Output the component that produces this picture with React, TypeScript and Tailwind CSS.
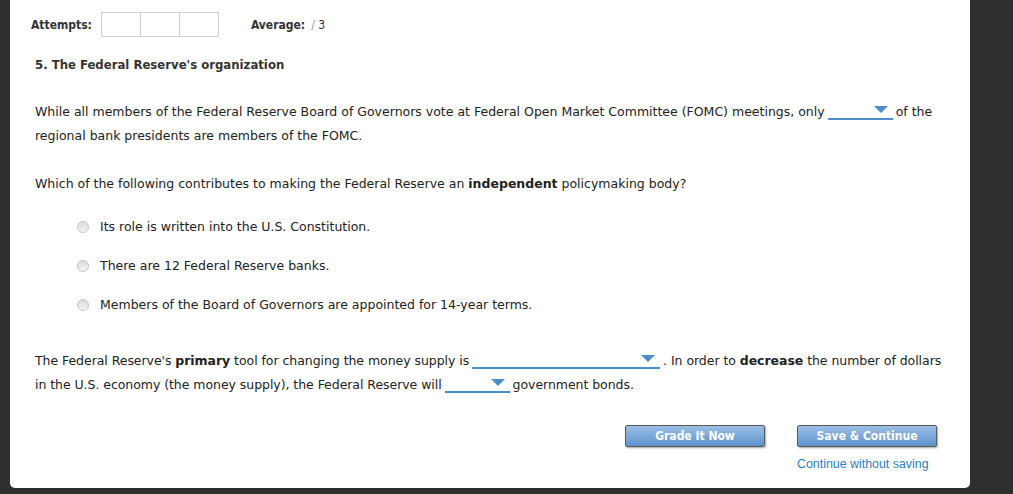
import React from "react";

function Dropdown({ width }: { width: number }) {
  return (
    <span
      className="inline-block relative align-[-4px] h-[17px] border-b-2 border-[#4f8dc9] mx-[3px]"
      style={{ width }}
    >
      <svg className="absolute right-[5px] top-[3px]" width="14" height="7" viewBox="0 0 14 7">
        <polygon points="0,0 14,0 7,7" fill="#4f8dc9" />
      </svg>
    </span>
  );
}

function Radio({ label }: { label: string }) {
  return (
    <div className="flex items-center h-[20px]">
      <span className="w-[12px] h-[12px] rounded-full border border-[#c4c4c4] bg-gradient-to-b from-[#dcdcdc] to-[#f4f4f4] ml-[67px] mr-[11px]" />
      <span>{label}</span>
    </div>
  );
}

const labelFont = { fontFamily: '"DejaVu Sans Condensed", "DejaVu Sans", Tahoma, sans-serif' };

export default function App() {
  const options = [
    "Its role is written into the U.S. Constitution.",
    "There are 12 Federal Reserve banks.",
    "Members of the Board of Governors are appointed for 14-year terms.",
  ];

  return (
    <div className="w-[1013px] h-[494px] bg-[#2f2f2f] overflow-hidden">
      <div
        className="ml-[10px] w-[960px] h-[488px] bg-white rounded-b-[5px] text-[12.5px] text-[#222]"
        style={{ fontFamily: '"DejaVu Sans", Verdana, sans-serif' }}
      >
        {/* attempts row */}
        <div className="flex items-center pt-[12px] pl-[21px] text-[#333]" style={labelFont}>
          <span className="font-bold text-[12px] mr-[9px]">Attempts:</span>
          <div className="flex">
            {[0, 1, 2].map((i) => (
              <div key={i} className={`w-[40px] h-[25px] border border-[#cfcfcf] ${i > 0 ? "-ml-px" : ""}`} />
            ))}
          </div>
          <span className="font-bold text-[12px] ml-[32px] mr-[6px]">Average:</span>
          <span className="text-[12px]">
            <span className="text-[#999]">/</span> 3
          </span>
        </div>

        <div className="px-[25px]">
          <h2 className="font-bold text-[13px] text-[#333] mt-[19px] leading-[18px]" style={labelFont}>
            5. The Federal Reserve's organization
          </h2>

          <p className="mt-[26px] leading-[24px]">
            While all members of the Federal Reserve Board of Governors vote at Federal Open Market Committee (FOMC) meetings, only
            <Dropdown width={65} />
            of the regional bank presidents are members of the FOMC.
          </p>

          <p className="mt-[24px] leading-[24px]">
            Which of the following contributes to making the Federal Reserve an <b>independent</b> policymaking body?
          </p>

          <div className="mt-[21px] flex flex-col gap-[19px] -ml-[25px]">
            {options.map((o) => (
              <Radio key={o} label={o} />
            ))}
          </div>

          <p className="mt-[34px] leading-[24px] tracking-[-0.05px]">
            The Federal Reserve's <b>primary</b> tool for changing the money supply is
            <Dropdown width={188} />. In order to <b>decrease</b> the number of dollars in the U.S. economy (the money supply), the Federal Reserve will
            <Dropdown width={65} />
            government bonds.
          </p>
        </div>

        <div className="flex justify-end pr-[33px] mt-[28px] gap-[32px]">
          <button
            className="w-[140px] h-[22px] rounded-[2px] border border-[#5a5a5a] bg-gradient-to-b from-[#9bbfe6] to-[#5d93cc] text-white font-bold text-[12px] shadow-[1px_1px_2px_rgba(0,0,0,0.35)]"
            style={labelFont}
          >
            Grade It Now
          </button>
          <div className="flex flex-col">
            <button
              className="w-[140px] h-[22px] rounded-[2px] border border-[#5a5a5a] bg-gradient-to-b from-[#9bbfe6] to-[#5d93cc] text-white font-bold text-[12px] shadow-[1px_1px_2px_rgba(0,0,0,0.35)]"
              style={labelFont}
            >
              Save &amp; Continue
            </button>
            <a
              className="mt-[8px] text-[12.4px] text-[#2a7fc4]"
              style={{ fontFamily: '"Liberation Sans", Arial, sans-serif' }}
            >
              Continue without saving
            </a>
          </div>
        </div>
      </div>
    </div>
  );
}
